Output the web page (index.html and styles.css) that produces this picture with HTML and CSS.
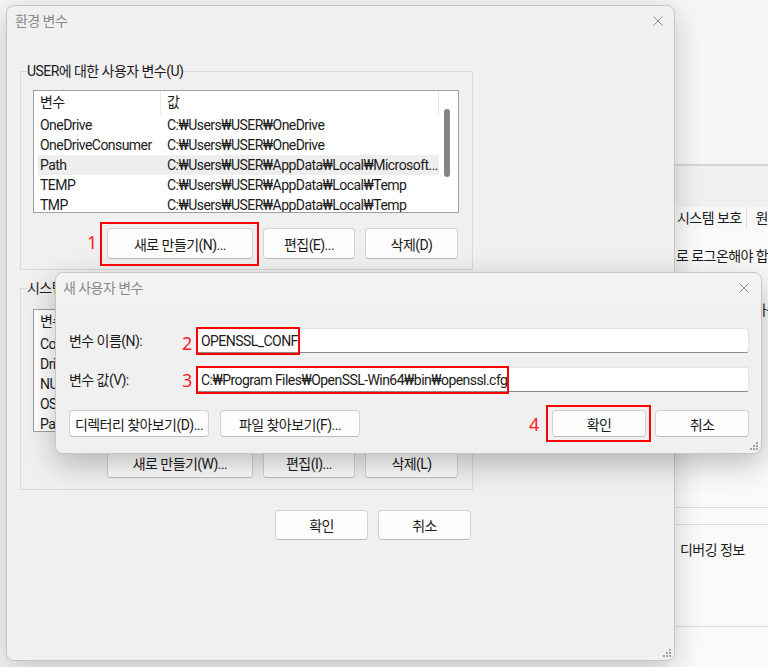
FILE: index.html
```html
<!DOCTYPE html>
<html lang="ko">
<head>
    <meta charset="UTF-8">
    <meta name="viewport" content="width=device-width, initial-scale=1.0">
    <title>환경 변수</title>
    <link rel="stylesheet" href="styles.css">
</head>
<body>

<div class="desktop">

    <!-- fenêtre en arrière-plan (propriétés système) -->
    <div class="back-window">
        <div class="back-title"></div>
        <div class="back-tabs">
            <span class="back-tab">시스템 보호</span>
            <span class="back-tab">원격</span>
        </div>
        <div class="back-panel">
            <p class="back-line">로 로그온해야 합니다.</p>
            <p class="back-line back-line-far">가상 메모리</p>
            <div class="back-rule back-rule-tall"></div>
            <div class="back-rule"></div>
            <p class="back-line back-line-debug">디버깅 정보</p>
            <div class="back-rule back-rule-end"></div>
        </div>
    </div>

    <!-- fenêtre principale -->
    <div class="window env-window">
        <div class="titlebar">
            <span class="title">환경 변수</span>
            <svg class="close" width="10" height="10" viewBox="0 0 10 10"><path d="M0.5 0.5L9.5 9.5M9.5 0.5L0.5 9.5" stroke="#8a8a8a" stroke-width="1" fill="none"/></svg>
        </div>

        <div class="window-body">
            <div class="group">
                <span class="group-title">USER에 대한 사용자 변수(U)</span>
                <div class="listbox">
                    <div class="list-main">
                        <div class="list-head">
                            <span class="head-name">변수</span>
                            <span class="head-value">값</span>
                        </div>
                        <div class="row"><span class="cell-name">OneDrive</span><span class="cell-value">C:₩Users₩USER₩OneDrive</span></div>
                        <div class="row"><span class="cell-name">OneDriveConsumer</span><span class="cell-value">C:₩Users₩USER₩OneDrive</span></div>
                        <div class="row row-selected"><span class="cell-name">Path</span><span class="cell-value">C:₩Users₩USER₩AppData₩Local₩Microsoft...</span></div>
                        <div class="row"><span class="cell-name">TEMP</span><span class="cell-value">C:₩Users₩USER₩AppData₩Local₩Temp</span></div>
                        <div class="row"><span class="cell-name">TMP</span><span class="cell-value">C:₩Users₩USER₩AppData₩Local₩Temp</span></div>
                    </div>
                    <div class="scrollbar"><div class="thumb"></div></div>
                </div>
                <div class="button-row">
                    <button class="btn btn-wide">새로 만들기(N)...</button>
                    <button class="btn">편집(E)...</button>
                    <button class="btn btn-del">삭제(D)</button>
                </div>
            </div>

            <div class="group group-system">
                <span class="group-title">시스템 변수(S)</span>
                <div class="listbox">
                    <div class="list-main">
                        <div class="list-head">
                            <span class="head-name">변수</span>
                            <span class="head-value">값</span>
                        </div>
                        <div class="row"><span class="cell-name">ComSpec</span><span class="cell-value">C:₩WINDOWS₩system32₩cmd.exe</span></div>
                        <div class="row"><span class="cell-name">DriverData</span><span class="cell-value">C:₩Windows₩System32₩Drivers₩DriverData</span></div>
                        <div class="row"><span class="cell-name">NUMBER_OF_PROCESSORS</span><span class="cell-value">8</span></div>
                        <div class="row"><span class="cell-name">OS</span><span class="cell-value">Windows_NT</span></div>
                        <div class="row"><span class="cell-name">Path</span><span class="cell-value">C:₩WINDOWS₩system32;C:₩WINDOWS</span></div>
                    </div>
                    <div class="scrollbar"><div class="thumb"></div></div>
                </div>
                <div class="button-row">
                    <button class="btn btn-wide">새로 만들기(W)...</button>
                    <button class="btn">편집(I)...</button>
                    <button class="btn btn-del">삭제(L)</button>
                </div>
            </div>

            <div class="footer-buttons">
                <button class="btn btn-footer">확인</button>
                <button class="btn btn-footer">취소</button>
            </div>
        </div>

        <svg class="grip" width="8" height="8" viewBox="0 0 8 8" fill="#a3a3a3"><rect x="6" y="0" width="2" height="2"/><rect x="3" y="3" width="2" height="2"/><rect x="6" y="3" width="2" height="2"/><rect x="0" y="6" width="2" height="2"/><rect x="3" y="6" width="2" height="2"/><rect x="6" y="6" width="2" height="2"/></svg>
    </div>

    <!-- boîte de dialogue : nouvelle variable -->
    <div class="window new-var-dialog">
        <div class="titlebar dialog-titlebar">
            <span class="title">새 사용자 변수</span>
            <svg class="close" width="10" height="10" viewBox="0 0 10 10"><path d="M0.5 0.5L9.5 9.5M9.5 0.5L0.5 9.5" stroke="#8a8a8a" stroke-width="1" fill="none"/></svg>
        </div>
        <div class="dialog-body">
            <div class="form-grid">
                <label for="var-name">변수 이름(N):</label>
                <input type="text" id="var-name" class="field" value="OPENSSL_CONF">
                <label for="var-value">변수 값(V):</label>
                <input type="text" id="var-value" class="field" value="C:₩Program Files₩OpenSSL-Win64₩bin₩openssl.cfg">
            </div>
            <div class="dialog-buttons">
                <button class="btn btn-browse">디렉터리 찾아보기(D)...</button>
                <button class="btn btn-browse">파일 찾아보기(F)...</button>
                <button class="btn btn-ok">확인</button>
                <button class="btn btn-cancel">취소</button>
            </div>
        </div>
        <svg class="grip" width="8" height="8" viewBox="0 0 8 8" fill="#a3a3a3"><rect x="6" y="0" width="2" height="2"/><rect x="3" y="3" width="2" height="2"/><rect x="6" y="3" width="2" height="2"/><rect x="0" y="6" width="2" height="2"/><rect x="3" y="6" width="2" height="2"/><rect x="6" y="6" width="2" height="2"/></svg>
    </div>

    <!-- annotations rouges -->
    <div class="mark mark-1"></div>
    <div class="mark mark-2"></div>
    <div class="mark mark-3"></div>
    <div class="mark mark-4"></div>
    <span class="num num-1">1</span>
    <span class="num num-2">2</span>
    <span class="num num-3">3</span>
    <span class="num num-4">4</span>

</div>

</body>
</html>
```

FILE: styles.css
```css
body {
    margin: 0;
    background-color: #f5f5f5;
    font-family: Roboto, "Noto Sans", "Noto Sans CJK KR", sans-serif;
    font-size: 14px;
    letter-spacing: -0.55px;
    line-height: 16px;
    color: #1b1b1b;
}

.desktop {
    position: relative;
    width: 768px;
    height: 667px;
    overflow: hidden;
}

/* fenêtres */
.window {
    position: absolute;
    box-sizing: border-box;
    background-color: #f0f0f0;
    border: 1px solid #c6c6c6;
    border-radius: 8px;
    box-shadow: 0 8px 28px rgba(0, 0, 0, 0.2);
}

.env-window {
    left: 6px;
    top: 5px;
    width: 669px;
    height: 656px;
    z-index: 2;
}

.titlebar {
    height: 30px;
    display: flex;
    align-items: center;
    justify-content: space-between;
    padding: 0 11px 0 8px;
}

.title {
    color: #8a8a8a;
}

.window-body {
    padding: 35px 13px 0 13px;
}

/* group box */
.group {
    position: relative;
    box-sizing: border-box;
    width: 453px;
    border: 1px solid #d9d9d9;
    padding: 18px 13px 10px 12px;
}

.group-system {
    margin-top: 18px;
    padding-top: 20px;
    padding-bottom: 11px;
}

.group-title {
    position: absolute;
    top: -9px;
    left: 6px;
    background-color: #f0f0f0;
}

/* liste */
.listbox {
    display: flex;
    box-sizing: border-box;
    height: 123px;
    background-color: #ffffff;
    border: 1px solid #a0a0a0;
    overflow: hidden;
}

.list-main {
    width: 401px;
    padding-left: 4px;
    overflow: hidden;
}

.list-head {
    display: flex;
    height: 24px;
    line-height: 22px;
    border-right: 1px solid #e8e8e8;
}

.head-name {
    width: 120px;
    padding-left: 2px;
    border-right: 1px solid #e8e8e8;
}

.head-value {
    padding-left: 6px;
}

.row {
    display: flex;
    height: 20px;
    line-height: 20px;
    white-space: nowrap;
}

.row-selected {
    background-color: #eeeeee;
}

.cell-name {
    width: 121px;
    padding-left: 2px;
    flex-shrink: 0;
    overflow: hidden;
}

.cell-value {
    padding-left: 6px;
}

.scrollbar {
    width: 18px;
    padding-left: 5px;
    box-sizing: border-box;
}

.thumb {
    width: 6px;
    height: 68px;
    margin-top: 18px;
    border-radius: 3px;
    background-color: #858585;
}

/* boutons */
.button-row {
    display: flex;
    justify-content: flex-end;
    gap: 10px;
    margin-top: 15px;
    padding-right: 1px;
}

.btn {
    box-sizing: border-box;
    width: 92px;
    height: 31px;
    padding: 0;
    font-family: inherit;
    font-size: inherit;
    letter-spacing: inherit;
    color: #1b1b1b;
    background-color: #fdfdfd;
    border: 1px solid #d3d3d3;
    border-bottom-color: #bcbcbc;
    border-radius: 4px;
}

.btn-wide {
    width: 146px;
}

.btn-del {
    width: 93px;
}

.footer-buttons {
    display: flex;
    justify-content: flex-end;
    gap: 10px;
    width: 453px;
    box-sizing: border-box;
    padding-right: 2px;
    margin-top: 20px;
}

.btn-footer {
    height: 30px;
    width: 93px;
}

.grip {
    position: absolute;
    right: 3px;
    bottom: 3px;
}

/* boîte de dialogue */
.new-var-dialog {
    left: 55px;
    top: 272px;
    width: 707px;
    height: 182px;
    z-index: 3;
    box-shadow: 0 10px 30px rgba(0, 0, 0, 0.25);
}

.dialog-titlebar {
    height: 30px;
    padding: 0 12px 0 7px;
    background-color: #f3f3f3;
    border-radius: 8px 8px 0 0;
}

.dialog-body {
    padding: 25px 12px 0 13px;
}

.form-grid {
    display: grid;
    grid-template-columns: 127px 1fr;
    row-gap: 14px;
    align-items: center;
}

.field {
    box-sizing: border-box;
    height: 25px;
    padding: 0 4px;
    font-family: inherit;
    font-size: inherit;
    letter-spacing: inherit;
    color: #1b1b1b;
    background-color: #ffffff;
    border: 1px solid #e3e3e3;
    border-bottom-color: #8a8a8a;
    border-radius: 3px;
    outline: none;
}

.dialog-buttons {
    display: flex;
    gap: 11px;
    margin-top: 18px;
}

.dialog-buttons .btn {
    height: 27px;
}

.btn-browse {
    width: 140px;
}

.btn-ok {
    width: 94px;
    margin-left: auto;
}

.btn-cancel {
    width: 94px;
    margin-left: -2px;
}

/* fenêtre en arrière-plan */
.back-window {
    position: absolute;
    left: 668px;
    top: 164px;
    width: 140px;
    height: 520px;
    z-index: 1;
    background-color: #f0f0f0;
    border-top: 2px solid #d6d6d6;
}

.back-title {
    height: 41px;
}

.back-tabs {
    display: flex;
    height: 22px;
    line-height: 22px;
    white-space: nowrap;
}

.back-tab {
    padding: 0 4px 0 9px;
    background-color: #f8f8f8;
    border-right: 1px solid #e2e2e2;
}

.back-panel {
    background-color: #fafafa;
    height: 460px;
    overflow: hidden;
}

.back-line {
    margin: 0;
    padding: 19px 0 0 8px;
    white-space: nowrap;
}

.back-line-far {
    padding: 38px 0 0 86px;
}

.back-rule {
    height: 16px;
    border-bottom: 1px solid #dcdcdc;
}

.back-rule-tall {
    height: 189px;
}

.back-line-debug {
    padding: 17px 0 0 12px;
}

.back-rule-end {
    height: 68px;
}

/* annotations */
.mark {
    position: absolute;
    z-index: 4;
    box-sizing: border-box;
    border: 2px solid #ff0000;
}

.mark-1 { left: 100px; top: 222px; width: 159px; height: 44px; }
.mark-2 { left: 196px; top: 327px; width: 104px; height: 28px; }
.mark-3 { left: 196px; top: 366px; width: 313px; height: 28px; }
.mark-4 { left: 546px; top: 405px; width: 105px; height: 37px; }

.num {
    position: absolute;
    z-index: 4;
    font-family: "Noto Sans", sans-serif;
    font-size: 18px;
    line-height: 18px;
    letter-spacing: 0;
    color: #ff1e1e;
}

.num-1 { left: 87px; top: 233px; }
.num-2 { left: 182px; top: 334px; }
.num-3 { left: 182px; top: 371px; }
.num-4 { left: 529px; top: 415px; }
```
